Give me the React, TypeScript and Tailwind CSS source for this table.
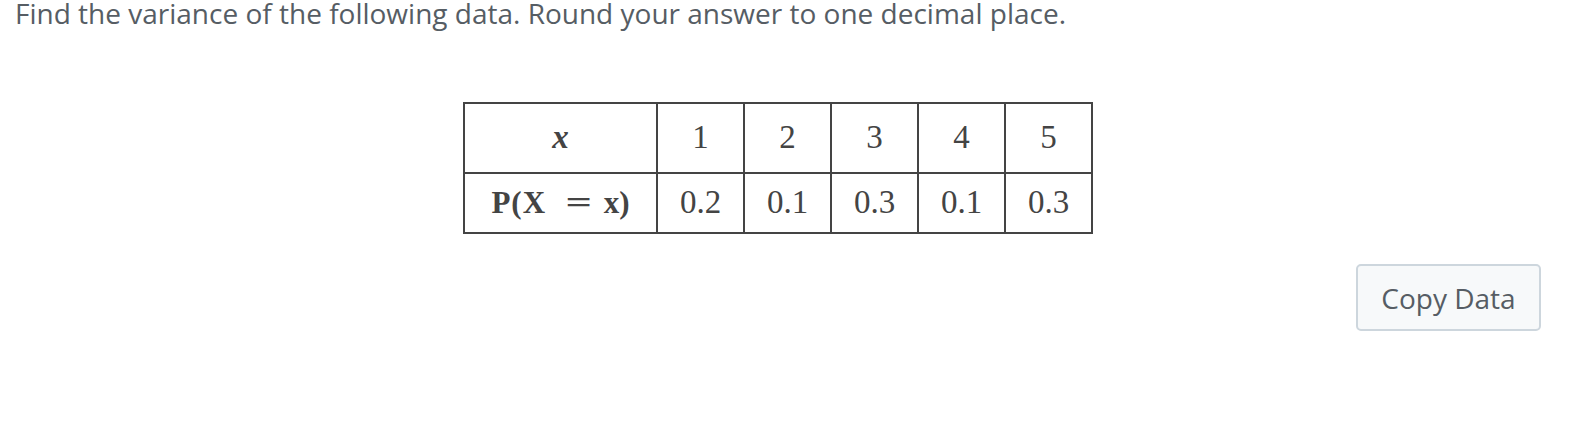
import React from "react";

export default function App() {
  const xs = ["1", "2", "3", "4", "5"];
  const ps = ["0.2", "0.1", "0.3", "0.1", "0.3"];
  return (
    <div className="w-[1571px] h-[427px] bg-white pl-[15px] pr-[30px] font-['Open_Sans',sans-serif] text-[#565d64]">
      <p className="text-[28px] leading-[27px]">
        Find the variance of the following data. Round your answer to one decimal place.
      </p>
      <div className="flex justify-center mt-[75px]">
        <div className="grid grid-cols-[191px_repeat(5,85px)] grid-rows-[68px_58px] gap-[2px] p-[2px] bg-[#444444] font-['Liberation_Serif',serif] text-[33px] text-[#444444]">
          <div className="bg-white flex items-center justify-center italic font-bold">x</div>
          {xs.map((v, i) => (
            <div key={"x" + i} className="bg-white flex items-center justify-center">
              {v}
            </div>
          ))}
          <div className="bg-white flex items-center justify-center font-bold text-[31px]">
            <span className="tracking-[1px]">P(X</span>
            <span className="inline-block scale-x-[1.5] ml-[24px]">=</span>
            <span className="ml-[16px]">x)</span>
          </div>
          {ps.map((v, i) => (
            <div key={"p" + i} className="bg-white flex items-center justify-center">
              {v}
            </div>
          ))}
        </div>
      </div>
      <div className="flex justify-end mt-[30px]">
        <button className="w-[185px] h-[67px] rounded-[5px] border-2 border-[#cdd6dd] bg-[#f7f9fa] text-[28px] text-[#565d64] font-['Open_Sans',sans-serif]">
          Copy Data
        </button>
      </div>
    </div>
  );
}
